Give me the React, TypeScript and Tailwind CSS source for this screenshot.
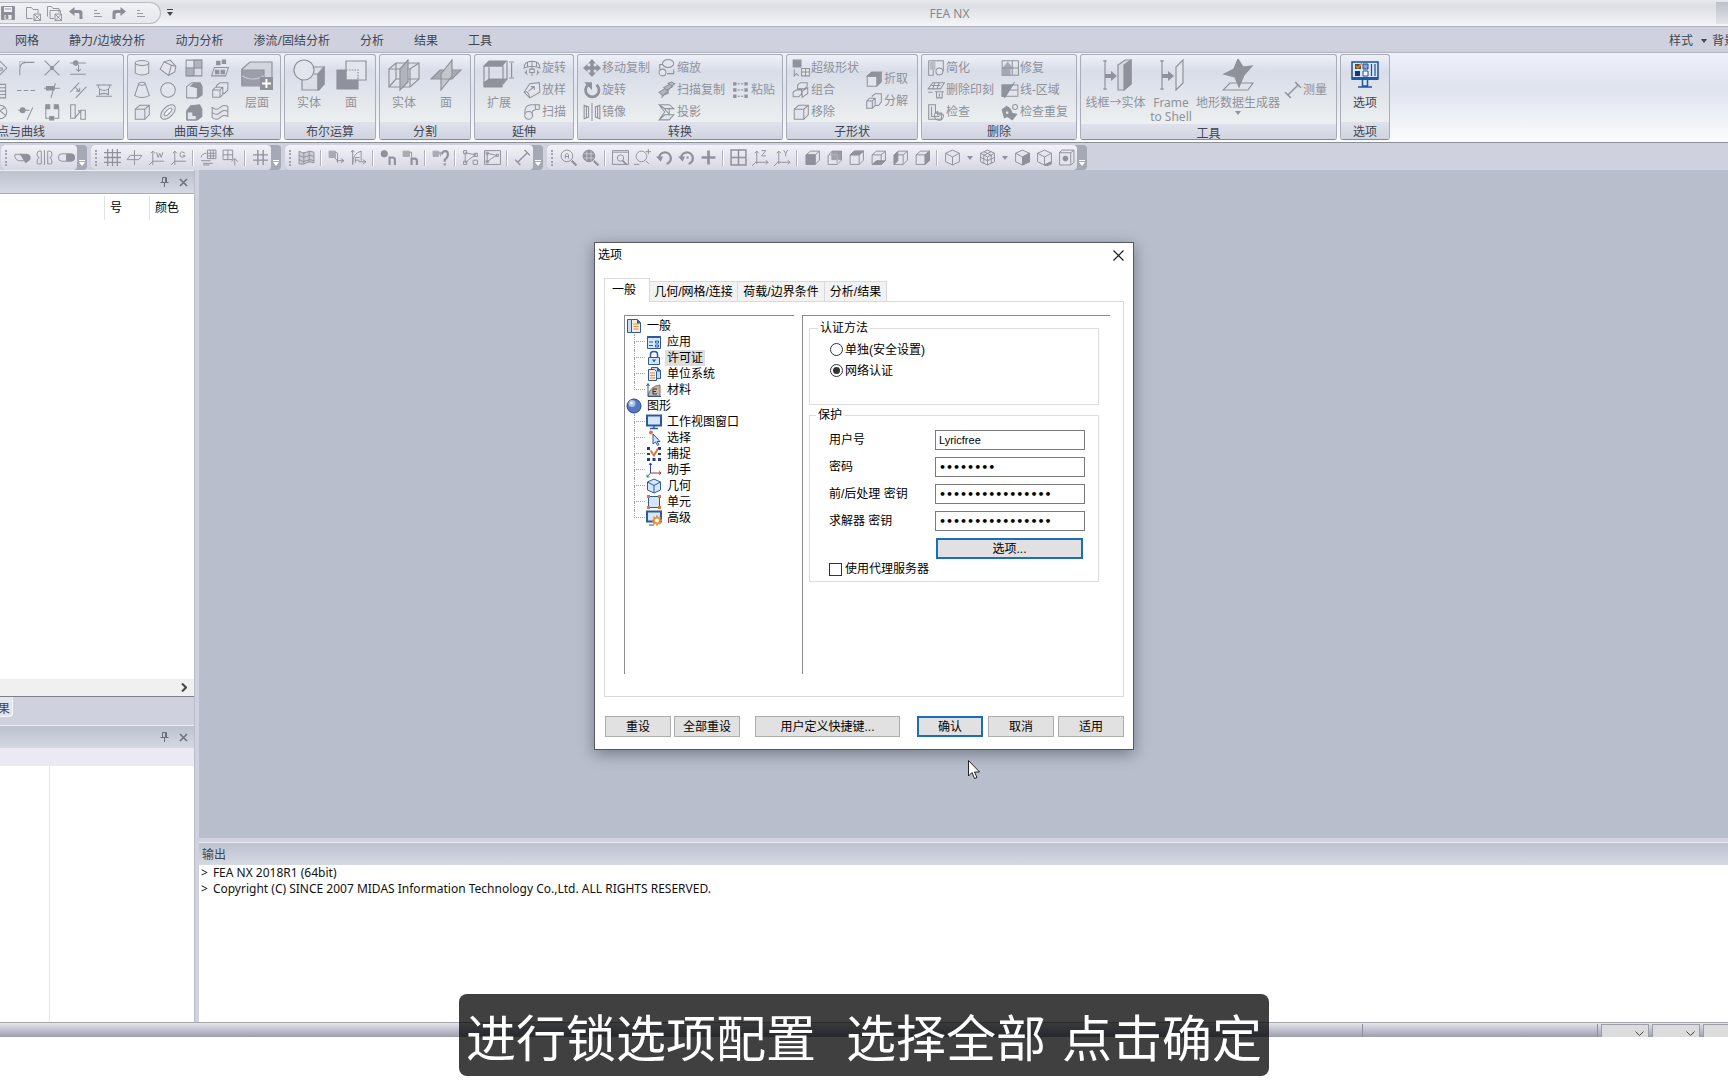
import React from "react";

/* ---------- icon drawings ---------- */

const L = "#e3e5ec";
const F = "currentColor";

const cube = (
  <>
    <path d="M2 5.500 6 2h8.500v8.500l-4 4H2z" fill={L} />
    <path d="M2 5.500h8.500v9M10.500 5.500l4-3.500" />
  </>
);
const isoCube = (
  <>
    <path d="M8 1 14.500 4v8L8 15 1.500 12V4z" fill={L} />
    <path d="M1.500 4 8 7.500 14.500 4M8 7.500V15" />
  </>
);

const art: Record<string, React.ReactNode> = {
  save: (
    <>
      <path d="M1.500 1.500h13v13h-13z" fill="#8b8e98" />
      <path d="M4 2h8v5H4zM4.500 10h7v4.500h-7z" fill="#f0f1f4" stroke="none" />
      <path d="M6 10.500h2v3H6z" fill={F} />
      <path d="M5 4h6" />
    </>
  ),
  folderX: (
    <>
      <path d="M1.500 13.500v-11h5l1.500 2h5v4M1.500 13.500h6" />
      <path d="M9 9h6.500v6.500H9zM9 9l6.500 6.500M15.500 9 9 15.500" />
    </>
  ),
  foldersX: (
    <>
      <path d="M1.500 11.500v-10h4l1.500 2h6v4M4 13.500h4M4 13.500v-8h10.500v3" />
      <path d="M9 9h6.500v6.500H9zM9 9l6.500 6.500M15.500 9 9 15.500" />
    </>
  ),
  undo: <path d="M1 6.500 6.500 2v3h5q3 0 3 3v6h-3V9.500q0-1.500-1.500-1.500H6.500v3z" fill={F} stroke="none" />,
  redo: <path d="M15 6.500 9.500 2v3h-5q-3 0-3 3v6h3V9.500q0-1.500 1.500-1.500h3.500v3z" fill={F} stroke="none" />,
  list: <path d="M4 5.500h3M4 8.500h6M4 11.500h8" />,
  diamond: <path d="M2 8 8 2l6 6-6 6zM6 8h4v2H6z" />,
  coil: <path d="M3 3h10v3H3zM4 6h9v3H4zM5 9h8v3H5zM6 12h7v3H6z" fill={L} />,
  dial: (
    <>
      <circle cx="8" cy="8" r="6" />
      <path d="M2 10 8 7l5 4M8 7l4-3" />
    </>
  ),
  fillet: (
    <>
      <path d="M2.500 14.500V9q0-6 6-6h7" />
      <path d="M2.500 7V2.500H8" strokeDasharray="1 1" />
    </>
  ),
  cross: (
    <>
      <path d="M1.500 1.500 14.500 14.500M14.500 1.500 1.500 14.500" />
      <path d="M6.500 8 8 6.500 9.500 8 8 9.500z" fill={F} />
    </>
  ),
  project: (
    <>
      <path d="M1 3.500h14M1 13.500h14M8.500 5v6M6.500 9l2 2 2-2" />
      <circle cx="6" cy="3.500" r="2" fill={F} />
    </>
  ),
  dashes: <path d="M0 8.500h16" strokeDasharray="4 2" />,
  trim: (
    <>
      <path d="M1 6.500h14M7 15 11 2" />
      <path d="M3 5h7v3H3z" fill={F} />
    </>
  ),
  offset: <path d="M1 10 9 1.500M6 15l9.500-10M5 5l4 4M6.500 9h3V6" />,
  tangent: <path d="M1 3.500h14M3 3.500v3M13 3.500v3M4 7q4 3 8 0v5q-4-2-8 0zM1 13.500h14" />,
  extendPt: (
    <>
      <path d="M1 6.500h10M9 15l5-11" />
      <circle cx="5" cy="6.500" r="2.200" fill={F} />
    </>
  ),
  ptSquare: (
    <>
      <path d="M2.500 3.500v10h11.500v-10h-3M2.500 3.500h3" />
      <path d="M2.500 1.500h3.500v3.500H2.500zM10 1.500h3.500v3.500H10zM6 12h3.500v3H6z" fill={F} />
    </>
  ),
  bars: <path d="M1.500 1.500h4v12h-4zM10.500 6.500h4v8h-4zM5.500 13l5-6M8 7h2.500v3" />,
  cylinder: (
    <>
      <path d="M2 3.500v9q6 3.500 12 0v-9" fill={L} />
      <ellipse cx="8" cy="3.500" rx="6" ry="2.200" fill={L} />
    </>
  ),
  prism: (
    <>
      <path d="M1 9 4.500 2.500 10 1l5 5.500-1 5L8.500 14.500z" fill={L} />
      <path d="M4.500 2.500 11 5.500 8.500 14.500M11 5.500l4 1" />
    </>
  ),
  checker: (
    <>
      <path d="M1 1h14v14H1zM8 1v14M1 8h14" />
      <path d="M8 1h7v7H8zM1 8h7v7H1z" fill={F} opacity=".6" />
    </>
  ),
  dots4: (
    <>
      <path d="M3 7.500h12.500L13 15H.500z" />
      <path d="M5 2h3v3H5zM10 1h3v3h-3zM4 10h3v3H4zM9 10h3v3H9z" fill={F} />
    </>
  ),
  cone: (
    <>
      <path d="M5 2.500 1.500 13q6.500 3.500 13 0L11 2.500" fill={L} />
      <ellipse cx="8" cy="2.500" rx="3" ry="1.300" fill={L} />
    </>
  ),
  sphere: <circle cx="8" cy="8" r="6.500" fill={L} />,
  cubeDark: (
    <>
      <path d="M1.500 5 6 1.500h7.500l1.500 3v8L11 15H1.500z" fill={L} />
      <path d="M5 4.500 8 2h5l2 3v7l-4 3V6z" fill={F} />
    </>
  ),
  cubes: (
    <>
      <path d="M5 4 8 1.500h7V8l-3 3H5z" fill={L} />
      <path d="M1.500 8 4 5.500h6.500v6.500L8 14.500H1.500zM1.500 8H8v6.500M8 8l2.500-2.500" fill={L} />
    </>
  ),
  cube,
  ring: (
    <>
      <ellipse cx="8" cy="8" rx="8" ry="4.500" transform="rotate(-45 8 8)" fill={L} />
      <ellipse cx="8" cy="8" rx="4.500" ry="1.700" transform="rotate(-45 8 8)" fill="#f4f5f8" />
    </>
  ),
  shell: (
    <>
      <path d="M1.500 7 5 2.500 13 1.500l2 4V12l-4 3H1.500z" fill={F} />
      <path d="M2 8h5v3h3v4H2z" fill={L} />
    </>
  ),
  flag: (
    <>
      <path d="M1 2q4 3 7 1t7 0v10q-4-2-7 0t-7 1z" fill="#c9ccd5" />
      <path d="M1 6q4 3 7 1t7 0M1 10q4 3 7 1t7 0M5.500 3v11M10.500 2v10.500" />
    </>
  ),
  sheet: (
    <>
      <path d="M1 4q4 3 7 0t7-1v9q-4-2-7 1t-7 0z" fill={L} />
      <path d="M1 8.500q4 3 7 0t7-1" />
    </>
  ),
  revolve: (
    <>
      <path d="M1 8q0-6 7-6t7 6q-7-3-14 0zM8 2v13M4 7V3M12 7V3M3 10v3M13 10v3M1.500 11.500 4 14M14.500 11.500 12 14" fill="none" />
      <path d="M6 9h4v3H6z" fill={L} />
    </>
  ),
  loft: (
    <>
      <path d="M1 10 6 2.500l8.500-1L15 10l-9 5z" fill={L} />
      <path d="M1 10q4-2 5 5M5 9l5-4M7 5h3v3" />
    </>
  ),
  sweep: (
    <>
      <path d="M1.500 9q0-7.500 6-7.500h7v4q-8 0-6 5z" fill={L} />
      <circle cx="5" cy="11" r="3.500" fill={L} />
      <path d="M11 1.500v4" />
    </>
  ),
  move: <path d="M8 0l3.500 4h-2v2.500H12v-2L16 8l-4 3.500v-2H9.500V12h2L8 16l-3.500-4h2V9.500H4v2L0 8l4-3.500v2h2.500V4h-2z" fill={F} stroke="none" />,
  rotate: (
    <>
      <path d="M4.500 3.500a6 6 0 1 0 7.500 0" strokeWidth="2.500" />
      <path d="M1 1h7v7z" fill={F} stroke="none" />
    </>
  ),
  mirror: <path d="M1 2l4 1.500v9L1 14zM15 2l-4 1.500v9L15 14zM8 0v16M3 3v10M13 3v10" fill={L} />,
  scale: (
    <>
      <ellipse cx="9" cy="4" rx="5" ry="3.500" fill={L} />
      <circle cx="4" cy="12" r="3" fill={L} />
      <path d="M1.500 9V5h3M8 13h6V9" />
    </>
  ),
  sweepCopy: <path d="M1 10l5-3 3 2-5 4zM5 6l5-3 3 2-5 3zM9 2l3-1 3 1.500-3 2zM3 15l9-10M6 12l3-1v-3" fill="#b5b7c0" />,
  shadow: <path d="M1 1.500h9l4 3.500H6zM1 15h9l4-4.500H6zM10 5v6M6 5.500 10 10M1 1.500 6 8l-5 7" fill={L} />,
  paste: (
    <>
      <path d="M1 1h3v3H1zM11 1h3v3h-3zM1 6.500h3v3H1zM11 6.500h3v3h-3zM1 12h3v3H1zM11 12h3v3h-3z" fill={F} stroke="none" />
      <path d="M5 2.500h5M5 8h5M5 13.500h5" strokeDasharray="2 1" />
    </>
  ),
  superShape: (
    <>
      <path d="M1 1h7v6H1z" fill={F} />
      <path d="M8.500 8.500h7v6.500h-7zM12 8.500V15M8.500 11.500h7" fill={L} />
      <path d="M2 9v6l2-2 2 2" />
    </>
  ),
  group: <path d="M5 3.500 7.500 1.500h6v3L11 7H5zM1 10l2.500-2h5v3.500L6 14H1zM9 9l5-3v5l-5 3.500z" fill={L} />,
  cubeTop: (
    <>
      {cube}
      <path d="M2 5.500 6 2h8.500l-4 3.500zM11 6l3-3v7l-3 3z" fill={F} />
    </>
  ),
  explode: <path d="M1.500 8 4 5.500h5V12l-2.500 2.500h-5zM6 4l3-2.500h5.500V9L12 12H9M1.500 8h5v6.500M6.500 8 9 5.500" fill={L} />,
  simplify: (
    <>
      <path d="M1.500 1.500h13v9h-5M1.500 1.500v13h4v-5" fill={L} />
      <circle cx="11" cy="11" r="3" fill={L} />
      <path d="M3 3h4v6H3z" fill={F} opacity=".5" />
    </>
  ),
  imprint: (
    <>
      <path d="M5 1.500h10.500L12 7H1z" fill={L} />
      <path d="M4 4h8M7 1.500 5 7M11 1.500 9 7M1 10h4M7 9.500h8M8.500 9.500V15h5V9.500M11 11v3" />
    </>
  ),
  check: (
    <>
      <path d="M1.500 1.500h6V9H13v5.500H1.500z" fill={L} />
      <path d="M4 3v9h7M9.500 7.500a4 4 0 1 0 5 3h-5z" />
    </>
  ),
  repair: (
    <>
      <path d="M1 1.500h14.500v13H1zM1 8h14.500M10 1.500v13" />
      <path d="M2 14V8l4-5 4 5-2 1v5z" fill={F} opacity=".7" />
    </>
  ),
  lineArea: (
    <>
      <path d="M1 3.500h14v10H1z" fill={L} />
      <path d="M1 3.500h9L4 13.500H1z" fill={F} />
      <path d="M3 15 12 1M8 8h7" />
    </>
  ),
  dup: (
    <>
      <path d="M1 6l4-3 3 2 2 4 4 1-4 5-4-3-3 1z" fill={F} />
      <circle cx="12.500" cy="3.500" r="2.200" />
      <path d="M4 7h3v3H4z" fill={L} />
    </>
  ),
  measure: <path d="M3.500 12.500 12.500 3.500M1 10l5 5M10 1l5 5" strokeWidth="1.300" />,
  layers: (
    <>
      <path d="M.500 5 4.500 1.500H15.500v12H.500z" fill="#d3d5dd" />
      <path d="M.500 5.500H11.500V13H.500z" fill="#9c9fa9" />
      <path d="M.500 8.500q5 3 11 0" stroke="#c6c8d0" />
      <path d="M9.500 9h6.500v6.500H9.500z" fill="#8f929c" stroke="none" />
      <path d="M12.700 10v4.500M10.500 12.200h4.500" stroke="#fff" strokeWidth="1" />
    </>
  ),
  boolSolid: (
    <>
      <path d="M4.500 6 7 4h8.500v8.500L13 15.500H4.500z" fill="#dcdee5" />
      <path d="M12.500 7.500 15.500 4v8.500l-3 3z" fill={F} />
      <path d="M4.500 7.500h8v8" />
      <circle cx="5.500" cy="5.500" r="5" fill={L} />
    </>
  ),
  boolFace: (
    <>
      <path d="M1 5.500h10.500V15H1z" fill={F} />
      <path d="M5.500 1h10v9.500h-10z" fill={L} />
      <path d="M5.500 5.500h6v5h-6z" strokeDasharray=".8 .6" />
    </>
  ),
  splitSolid: (
    <>
      <path d="M.500 5 4 2h11.500V10L11 14H.500z" fill="#dfe1e8" />
      <path d="M.500 5h10.500v9M11 5l4.500-3M4 2V10L.500 14M4 10h11.500" />
      <path d="M6 5 10 .500v11L6 15.500z" fill="#b3b5be" />
    </>
  ),
  splitFace: (
    <>
      <path d="M.500 10 5 5.500h10.500L11 10z" fill="#a9abb4" />
      <path d="M5.500 7.500 11 .500v8L5.500 15.500z" fill="#c4c6ce" />
      <path d="M5.500 10h5" />
    </>
  ),
  extrude: (
    <>
      <path d="M.500 3.500 3 1h8.500L9.500 3.500z" fill={F} />
      <path d="M.500 3.500h9.500v9l2-2.500V1M.500 3.500v9M3 4v6M13 1.500h2.500M13 9.500h2.500M14.300 2v7" />
      <path d="M.500 12 3 10h8.500L9.500 12v2H.500z" fill={F} />
    </>
  ),
  wire2solid: (
    <>
      <path d="M2.500 .500v15M1.500 1h2M1.500 15h2" />
      <path d="M2.500 7.500h3V6l3 2.500-3 2.500V9.500h-3z" fill={F} stroke="none" />
      <path d="M9 3l3.500-2.500h3v12L12 15.500H9z" fill="#d7d9e0" />
      <path d="M12 3 15.500.500v12L12 15.500z" fill={F} />
    </>
  ),
  frame2shell: (
    <>
      <path d="M3.500 .500v15M2.500 1h2M2.500 15h2" />
      <path d="M3.500 7.500h3V6l3 2.500-3 2.500V9.500h-3z" fill={F} stroke="none" />
      <path d="M10.500 4l3.500-3.500v11.500L10.500 15.500z" fill={L} />
    </>
  ),
  terrain: (
    <>
      <path d="M4 12h11.500l-2.500 3.500H.500z" />
      <path d="M8 0 10.500 4l4.500-.500-4 4.500-2.500 6L6.500 9 1 7.500 6 5z" fill={F} />
    </>
  ),
  cap1: (
    <>
      <path d="M1 5h6l4 6H4Q0 9 1 5z" fill={L} />
      <path d="M6 5h6q4 0 3 5l-4 3z" fill={F} />
    </>
  ),
  cap2: <path d="M5 2H3q-2 0-2 3t2 3q-2 1-2 4t2 2h2V2M11 2h2q2 0 2 3t-2 3q2 1 2 4t-2 2h-2V2M8 1v14" />,
  cap3: (
    <>
      <rect x=".5" y="4.500" width="15" height="7" rx="3" fill={L} />
      <path d="M8 5h5q2.500 0 2.500 3T13 11H8z" fill={F} />
    </>
  ),
  grid: <path d="M3.500 0v16M8 0v16M12.500 0v16M0 3.500h16M0 8h16M0 12.500h16" strokeWidth="1.200" />,
  plane: <path d="M4 6h11l-3 4H1zM8 1v14" fill="none" />,
  axisW: <path d="M4.500 15V2M2.500 4l2-2 2 2M4.500 11.500H15M1 15l3.500-3.500M8 3l1.500 5L11 4l1.500 4L14 3" />,
  axisG: <path d="M4.500 15V2M2.500 4l2-2 2 2M4.500 11.500H15M1 15l3.500-3.500M14 4q-4-3-4.500 1t4.500 2V6h-2" />,
  gridMove: <path d="M7 1h8v8H7zM7 4h8M7 6.500h8M10 1v8M12.500 1v8M1 8q1-4 5-4M1 11h9M3 13.500h9M3 15h6" />,
  gridPick: <path d="M1 1h9v9H1zM5.500 1v9M1 5.500h9M9 12l3-3 3 3M12 9v6.500" />,
  hash: <path d="M5.500 1v14M10.500 1v14M1 5.500h14M1 10.500h14" strokeWidth="1.300" />,
  nodeSel: (
    <>
      <path d="M1 2h6v6H1z" fill={F} opacity=".7" />
      <path d="M7 3l2 1v9M8 11h7M12 9l3 2-3 2M6 8l3 3" />
    </>
  ),
  elemSel: <path d="M2.500 1v14M1 3l1.500-2L4 3M2.500 14q0-10 8-12v9M5 13V8h4M5 10.500h4M8 12h7M12 10l3 2-3 2" />,
  ptN: (
    <>
      <circle cx="4" cy="4.500" r="3" fill={F} />
      <path d="M9 15V8h3q2 0 2 2.500V15" strokeWidth="2" />
    </>
  ),
  boxN: (
    <>
      <path d="M1 2h6v5H1z" fill={F} opacity=".7" />
      <path d="M7 3h2v5" />
      <path d="M9 15V9h3q2 0 2 2.500V15" strokeWidth="2" />
    </>
  ),
  boxQ: (
    <>
      <path d="M1 2h5v5H1zM6 3h2v4" fill={F} opacity=".7" />
      <path d="M9 5q1-3 3.500-3T15 5t-3 5v2M12 13.500v2" strokeWidth="2" />
    </>
  ),
  net1: <path d="M3 3.500l10 2-6 4-4 3.500zM1.500 1.500h3v3h-3zM11.500 4h3v3h-3zM1.500 11.500h3v3h-3zM10.500 10.500h4v4h-4z" fill={L} />,
  net2: <path d="M.500 1.500h15v13H.500zM3 4l9 2-5 3-4 3zM2 3h2v2H2zM11.500 5h2v2h-2zM2 11h2v2H2z" fill={L} />,
  zoomA: (
    <>
      <circle cx="6.500" cy="6.500" r="5.500" />
      <path d="M5 9V5.500L6.500 4 8 5.500V9M5 7h3" />
      <path d="M11 11l4.500 4.500" strokeWidth="2" />
    </>
  ),
  zoomGrid: (
    <>
      <circle cx="6.500" cy="6.500" r="5.500" fill={F} />
      <path d="M4.500 2v9M8.500 2v9M2 4.500h9M2 8.500h9" stroke="#e3e5ec" strokeWidth=".6" />
      <path d="M11 11l4.500 4.500" strokeWidth="2" />
    </>
  ),
  zoomWin: (
    <>
      <path d="M.500 1.500h15v13H.500zM1 3h14" />
      <circle cx="8" cy="8.500" r="3" />
      <path d="M10 11l4 4" strokeWidth="1.500" />
    </>
  ),
  zoomPM: (
    <>
      <circle cx="7" cy="7" r="5" />
      <path d="M11 11l3 3M11 2.500h5M13.500 0v5M0 14.500h5" />
    </>
  ),
  spinL: (
    <>
      <path d="M3 8a5.500 5.500 0 1 1 7 6" strokeWidth="2.200" />
      <path d="M0 7h6.500l-2 5z" fill={F} stroke="none" />
    </>
  ),
  spinDot: (
    <>
      <path d="M3 8a5.500 5.500 0 1 1 7 6" strokeWidth="2.200" />
      <path d="M0 7h6.500l-2 5zM8 7h2v2H8z" fill={F} stroke="none" />
    </>
  ),
  plus: <path d="M8 1.500v13M1.500 8h13" strokeWidth="2.500" />,
  windows: <path d="M1 1h14v14H1zM8 1v14M1 8h14" strokeWidth="1.400" />,
  axisZ: <path d="M4.500 14V2M2.500 4l2-2 2 2M3 12.500h12M13 10.500l2 2-2 2M0 16l4-4M9 1.500h4l-4 5h4" />,
  axisY: <path d="M4.500 14V2M2.500 4l2-2 2 2M3 12.500h12M13 10.500l2 2-2 2M0 16l4-4M9 1l2 3 2-3M11 4v3" />,
  vFront: (
    <>
      {cube}
      <path d="M2 5.500h8.500v9H2z" fill={F} />
    </>
  ),
  vBack: (
    <>
      {cube}
      <path d="M5.500 2.500h9V10h-9z" fill={F} opacity=".8" />
      <path d="M2 5.500h8.500v9" stroke="#e3e5ec" strokeDasharray="1 1" />
    </>
  ),
  vTop: (
    <>
      {cube}
      <path d="M2 5.500 6 2h8.500l-4 3.500z" fill={F} />
    </>
  ),
  vBottom: (
    <>
      {cube}
      <path d="M2 14.500 6 11h8.500l-4 3.500z" fill={F} />
    </>
  ),
  vLeft: (
    <>
      {cube}
      <path d="M2 5.500 5.500 2.500V11L2 14.500z" fill={F} />
    </>
  ),
  vRight: (
    <>
      {cube}
      <path d="M10.500 5.500 14.500 2v8.500l-4 4z" fill={F} />
    </>
  ),
  iso: isoCube,
  isoGrid: (
    <>
      {isoCube}
      <path d="M4.500 5.500v8M11.500 5.500v8M1.500 8 8 11l6.500-3M4.500 2.500 11.500 6M11.500 2.500 4.500 6" />
    </>
  ),
  isoDark: (
    <>
      {isoCube}
      <path d="M8 7.500 14.500 4v8L8 15z" fill={F} />
    </>
  ),
  isoShadow: (
    <>
      {isoCube}
      <path d="M8 15l6.500-3v2L10 16z" fill={F} />
    </>
  ),
  boxDot: (
    <>
      <path d="M1.500 3 4 1h11v11.500L12 15H1.500zM12 3.500V15M1.500 3.500H12L15 1" fill={L} />
      <circle cx="7" cy="9" r="2.300" fill={F} />
    </>
  ),
};

function Icon({ n, className = "size-[18px]", thin }: { n: string; className?: string; thin?: boolean }) {
  return (
    <svg viewBox="0 0 16 16" fill="none" stroke="currentColor" strokeWidth={thin ? 0.6 : 0.9} className={`shrink-0 ${className}`} aria-hidden="true">
      {art[n]}
    </svg>
  );
}

/* ---------- ribbon ---------- */

function Group({ title, width, children }: { title: string; width: string; children: React.ReactNode }) {
  return (
    <section
      className={`flex h-[86px] shrink-0 flex-col overflow-hidden rounded-[3px] border border-[#a9adb8] border-b-[#858a94] bg-linear-to-b from-[#eef0f9] from-0% via-[#d9dde8] via-20% to-[#f0f4f1] to-95% ${width}`}
    >
      <div className="flex flex-1 pt-px text-[#8f929b]">{children}</div>
      <h2 className="h-[17px] shrink-0 bg-linear-to-b from-[#dfe2ec] to-[#d0d4e0] text-center text-xs leading-5 text-[#3f4552]">{title}</h2>
    </section>
  );
}

function Small({ n, label }: { n: string; label: string }) {
  return (
    <button type="button" className="flex h-[22px] items-center gap-px pt-0.5 text-xs leading-4 whitespace-nowrap">
      <Icon n={n} />
      {label}
    </button>
  );
}

function Big({ n, label, width, children }: { n: string; label: React.ReactNode; width: string; children?: React.ReactNode }) {
  return (
    <button type="button" className={`flex shrink-0 flex-col items-center pt-[3px] text-xs leading-[13px] whitespace-nowrap ${width}`}>
      {children ?? <Icon n={n} className="size-8" thin />}
      <span className="mt-[5px]">{label}</span>
    </button>
  );
}

function IconGrid({ rows }: { rows: string[][] }) {
  return (
    <div className="flex flex-col">
      {rows.map((r, i) => (
        <div key={i} className="flex h-[22px] items-center pt-px">
          {r.map((n, j) => (
            <button key={j} type="button" aria-label={n || "empty"} className="flex w-[26px] justify-center">
              {n ? <Icon n={n} /> : null}
            </button>
          ))}
        </div>
      ))}
    </div>
  );
}

function Caret({ className = "" }: { className?: string }) {
  return (
    <svg viewBox="0 0 6 4" className={`h-1 w-1.5 ${className}`} fill="currentColor" aria-hidden="true">
      <path d="M0 0h6L3 4z" />
    </svg>
  );
}

function Ribbon() {
  return (
    <div className="flex h-[91px] gap-[3px] overflow-hidden border-y border-t-[#b4b7c2] border-b-[#8d919b] bg-linear-to-b from-[#eef1fb] via-[#dfe3ed] via-40% to-[#fbfcfd] pt-px shadow-sm">
      <Group title="点与曲线" width="-ml-[82px] w-[206px]">
        <div className="ml-auto pr-1.5">
          <IconGrid
            rows={[
              ["diamond", "fillet", "cross", "project", ""],
              ["coil", "dashes", "trim", "offset", "tangent"],
              ["dial", "extendPt", "ptSquare", "bars", ""],
            ]}
          />
        </div>
      </Group>
      <Group title="曲面与实体" width="w-[154px]">
        <div className="pl-px">
          <IconGrid
            rows={[
              ["cylinder", "prism", "checker", "dots4"],
              ["cone", "sphere", "cubeDark", "cubes"],
              ["cube", "ring", "shell", "sheet"],
            ]}
          />
        </div>
        <Big n="layers" label="层面" width="w-12" />
      </Group>
      <Group title="布尔运算" width="w-[92px]">
        <Big n="boolSolid" label="实体" width="w-12" />
        <Big n="boolFace" label="面" width="w-9" />
      </Group>
      <Group title="分割" width="w-[92px]">
        <Big n="splitSolid" label="实体" width="w-12" />
        <Big n="splitFace" label="面" width="w-9" />
      </Group>
      <Group title="延伸" width="w-[100px]">
        <Big n="extrude" label="扩展" width="w-12" />
        <div>
          <Small n="revolve" label="旋转" />
          <Small n="loft" label="放样" />
          <Small n="sweep" label="扫描" />
        </div>
      </Group>
      <Group title="转换" width="w-[206px]">
        <div className="w-20 shrink-0 pl-[5px]">
          <Small n="move" label="移动复制" />
          <Small n="rotate" label="旋转" />
          <Small n="mirror" label="镜像" />
        </div>
        <div className="w-[74px] shrink-0">
          <Small n="scale" label="缩放" />
          <Small n="sweepCopy" label="扫描复制" />
          <Small n="shadow" label="投影" />
        </div>
        <div className="pt-[22px]">
          <Small n="paste" label="粘贴" />
        </div>
      </Group>
      <Group title="子形状" width="w-[132px]">
        <div className="w-[78px] shrink-0 pl-[5px]">
          <Small n="superShape" label="超级形状" />
          <Small n="group" label="组合" />
          <Small n="cube" label="移除" />
        </div>
        <div className="pt-[11px]">
          <Small n="cubeTop" label="折取" />
          <Small n="explode" label="分解" />
        </div>
      </Group>
      <Group title="删除" width="w-[156px]">
        <div className="w-[79px] shrink-0 pl-[5px]">
          <Small n="simplify" label="简化" />
          <Small n="imprint" label="删除印刻" />
          <Small n="check" label="检查" />
        </div>
        <div>
          <Small n="repair" label="修复" />
          <Small n="lineArea" label="线-区域" />
          <Small n="dup" label="检查重复" />
        </div>
      </Group>
      <Group title="工具" width="w-[257px]">
        <Big n="wire2solid" label="线框→实体" width="w-[69px]" />
        <Big
          n="frame2shell"
          width="w-[42px]"
          label={
            <span className="flex flex-col items-center leading-[14px]">
              <span>Frame</span>
              <span>to Shell</span>
            </span>
          }
        />
        <Big
          n="terrain"
          width="w-[92px]"
          label={
            <span className="flex flex-col items-center gap-0.5">
              地形数据生成器
              <Caret />
            </span>
          }
        />
        <div className="pt-[22px]">
          <Small n="measure" label="测量" />
        </div>
      </Group>
      <Group title="选项" width="w-[50px]">
        <Big n="" label={<span className="text-[#3f4552]">选项</span>} width="w-12">
          <svg viewBox="0 0 28 32" className="h-8 w-7" aria-hidden="true">
            <path d="M1 3h26v17H1z" fill="#d7e8fb" stroke="#1f4e96" strokeWidth="1.500" />
            <path d="M1 18h26v3H1z" fill="#1f57ad" />
            <path d="M4 5h6v5H4z" fill="#5a4a3a" />
            <path d="M5 7l2 2 4-5" stroke="#e88a2c" strokeWidth="1.500" fill="none" />
            <path d="M12 5h5v5h-5z" fill="#8fa4cc" stroke="#1f4e96" />
            <path d="M4 12h5v5H4z" fill="#123a78" />
            <path d="M12 12h5v5h-5z" fill="#fff" stroke="#1f4e96" />
            <path d="M20.500 5v12M24 5v12" stroke="#1f4e96" strokeWidth="1.200" />
            <path d="M11.500 21v6h5v-6M7 28h14" fill="#d7e8fb" stroke="#1f57ad" strokeWidth="1.500" />
          </svg>
        </Big>
      </Group>
    </div>
  );
}

/* ---------- toolbars ---------- */

const toolbars: string[][] = [
  ["cap1", "cap2", "cap3"],
  ["grid", "plane", "axisW", "axisG", "|", "gridMove", "gridPick", "|", "hash"],
  ["flag", "|", "nodeSel", "elemSel", "|", "ptN", "boxN", "|", "boxQ", "|", "net1", "net2", "|", "measure"],
  ["zoomA", "zoomGrid", "|", "zoomWin", "zoomPM", "spinL", "spinDot", "plus", "|", "windows", "axisZ", "axisY", "|", "vFront", "vBack", "vTop", "vBottom", "vLeft", "vRight", "|", "iso", "v", "isoGrid", "v", "isoDark", "isoShadow", "boxDot"],
];

function Toolbars() {
  return (
    <div className="flex h-[27px] gap-1 overflow-hidden bg-[#cfd2de] pt-0.5 pl-px text-[#8e919b]">
      {toolbars.map((t, i) => (
        <div key={i} className="flex h-[25px] shrink-0 overflow-hidden rounded bg-[#a5a9b5]">
          <div className="flex items-center rounded bg-linear-to-b from-[#f2f1f8] to-[#d6d8e3]">
            <span className="flex w-[10px] justify-center">
              <span className="h-4 border-l-2 border-dotted border-[#a0a3b0]" />
            </span>
            {t.map((n, j) =>
              n === "|" ? (
                <span key={j} className="flex w-2 justify-center">
                  <span className="h-4 w-0.5 border-l border-[#b0b3be] bg-white" />
                </span>
              ) : n === "v" ? (
                <button key={j} type="button" aria-label="more" className="flex w-[13px] justify-center">
                  <Caret />
                </button>
              ) : (
                <button key={j} type="button" aria-label={n} className="flex w-[22px] justify-center">
                  <Icon n={n} className="size-[17px]" />
                </button>
              ),
            )}
          </div>
          <button type="button" aria-label="toolbar options" className="flex w-[10px] flex-col items-center justify-end gap-px pb-1 text-white">
            <span className="h-px w-1.5 bg-white" />
            <Caret />
          </button>
        </div>
      ))}
    </div>
  );
}

/* ---------- side panels ---------- */

function PanelHead() {
  return (
    <header className="flex h-[23px] shrink-0 items-center justify-end gap-2.5 border-t border-[#eceef4] bg-linear-to-b from-[#bcc1ce] to-[#d5d9e4] pr-1.5 text-[#6b6f7a]">
      <button type="button" aria-label="pin">
        <svg viewBox="0 0 9 10" className="h-2.5 w-[9px]" fill="none" stroke="currentColor">
          <path d="M2.500 5.500v-5h4v5M5.500 1v4.500M.500 5.500h8M4.500 6v4" />
        </svg>
      </button>
      <button type="button" aria-label="close panel">
        <svg viewBox="0 0 9 9" className="size-[9px]" fill="none" stroke="currentColor" strokeWidth="1.500">
          <path d="M1 1l7 7M8 1 1 8" />
        </svg>
      </button>
    </header>
  );
}

function Side() {
  return (
    <aside className="flex w-[195px] shrink-0 flex-col border-r border-[#b9bcc8] bg-[#cfd2de]">
      <PanelHead />
      <div className="flex h-[504px] flex-col border-t border-b border-t-[#a9acb8] border-b-[#7d8088] bg-white text-xs text-black">
        <div className="flex flex-1 items-start justify-end pt-0.5">
          <div className="h-6 w-[45px] border-l border-[#e2e2e6] pl-[5px] leading-6">号</div>
          <div className="h-6 w-[45px] border-l border-[#e2e2e6] pl-[5px] leading-6">颜色</div>
        </div>
        <div className="flex h-[17px] items-center justify-end bg-[#f0f0f0] pr-[7px]">
          <svg viewBox="0 0 6 9" className="h-[9px] w-1.5" fill="none" stroke="#444" strokeWidth="2">
            <path d="M1 .500l4 4-4 4" />
          </svg>
        </div>
      </div>
      <div className="h-[28px] overflow-hidden">
        <button type="button" className="-ml-0.5 h-5 rounded-b border-r border-b border-[#f6f7fa] bg-[#e3e6ee] pt-1 pr-0.5 text-xs leading-4 text-[#3f4552]">
          果
        </button>
      </div>
      <PanelHead />
      <div className="h-[18px] bg-[#ebe9f2]" />
      <div className="flex-1 bg-white">
        <div className="h-full w-[50px] border-r border-[#e6e6ea]" />
      </div>
    </aside>
  );
}

/* ---------- options dialog ---------- */

const B = "#2c5aa0";
const treeArt: Record<string, React.ReactNode> = {
  doc: (
    <>
      <path d="M1.500 1.500h4v13h-4z" fill="#c9dcf5" stroke={B} />
      <path d="M5.500 1.500h6l3 3v10h-9z" fill="#fbead6" stroke={B} />
      <path d="M7.500 6h5M7.500 8.500h5M7.500 11h5" stroke="#e08a3c" />
      <path d="M11 1.500v4h4z" fill={B} />
    </>
  ),
  app: (
    <>
      <path d="M1.500 2.500h13v12h-13z" fill="#d6e6fa" stroke={B} />
      <path d="M1.500 3h13" stroke={B} strokeWidth="2" />
      <path d="M3 8h4M3 11.500h4M9.500 7h3v2h-3zM9.500 11h3v2h-3z" stroke={B} />
    </>
  ),
  lock: (
    <>
      <path d="M4.500 7V4q0-2.500 3.500-2.500T11.500 4v3" stroke={B} strokeWidth="1.500" />
      <path d="M2.500 7.500h11v7h-11z" fill="#d6e6fa" stroke={B} />
      <path d="M6 9.500h4l-2 3z" fill={B} />
    </>
  ),
  unit: (
    <>
      <path d="M5.500 1.500h6l3 3v8h-9z" fill="#c9dcf5" stroke={B} />
      <path d="M2.500 3.500h6l2 2v9h-8z" fill="#fbead6" stroke={B} />
      <path d="M4 7h5M4 9.500h5M4 12h5" stroke="#e08a3c" />
      <path d="M11 1.500v4h4z" fill={B} />
    </>
  ),
  mat: (
    <>
      <path d="M2 14q2-10 12-11v11z" fill="#c9b7aa" stroke="#8a6f60" />
      <path d="M2 2v12.500h13M.500 4 2 1.500 3.500 4" stroke={B} />
      <path d="M7 12V7h4M7 9.500h3M7 12h4" stroke="#333" />
    </>
  ),
  ball: (
    <>
      <circle cx="8" cy="8" r="7" fill="#5577bd" stroke="#2b4785" />
      <circle cx="6" cy="5.500" r="3.500" fill="#a9c0ea" />
      <circle cx="5.500" cy="5" r="1.500" fill="#e8f0fc" />
    </>
  ),
  mon: (
    <>
      <path d="M1 1.500h14v10H1z" fill="#d6e6fa" stroke={B} strokeWidth="2" />
      <path d="M8 12v3M4 14.500h8" stroke={B} strokeWidth="1.500" />
    </>
  ),
  sel: (
    <>
      <circle cx="5" cy="2.500" r="2" fill="#e0763a" />
      <path d="M7 4v10l2.500-2 2 3.500 1.500-1-2-3H14z" fill="#d6e6fa" stroke={B} />
    </>
  ),
  snap: (
    <>
      <path d="M1 1h3v3H1zM12 1h3v3h-3zM1 7h3v2H1zM12 7h3v2h-3zM1 12h3v3H1zM6.500 12h3v3h-3zM12 12h3v3h-3z" fill="#1f3f80" />
      <path d="M4.500 4.500l3.500 5 4-7" stroke="#e0763a" strokeWidth="2" />
    </>
  ),
  axis: (
    <>
      <path d="M4.500 11V1M3 3l1.500-2L6 3" stroke="#2a49c0" />
      <path d="M4.500 11H15M13 9.500l2 1.500-2 1.500" stroke="#b03030" />
      <path d="M4.500 11 1 15M1 12.500V15h2.500" stroke="#2f8a50" />
    </>
  ),
  geo: (
    <>
      <path d="M8 1 14.500 4v8L8 15 1.500 12V4z" fill="#d6e6fa" stroke={B} />
      <path d="M1.500 4 8 7.500 14.500 4M8 7.500V15" stroke={B} />
    </>
  ),
  elem: (
    <>
      <path d="M2.500 2.500h11v11h-11z" fill="#d6e6fa" stroke={B} />
      <path d="M1 1h3v3H1zM12 1h3v3h-3zM1 12h3v3H1zM12 12h3v3h-3z" fill="#e0763a" />
    </>
  ),
  adv: (
    <>
      <path d="M1 1.500h14v10H1z" fill="#d6e6fa" stroke={B} strokeWidth="2" />
      <path d="M3 15h5" stroke={B} />
      <path d="M11 5.500v10M6 10.500h10M7.500 7l7 7M14.500 7l-7 7" stroke="#f0902c" strokeWidth="2" />
      <circle cx="11" cy="10.500" r="2.800" fill="#fff" stroke="#f0902c" strokeWidth="1.500" />
    </>
  ),
};

const tree = [
  { icon: "doc", label: "一般", items: [["app", "应用"], ["lock", "许可证"], ["unit", "单位系统"], ["mat", "材料"]] },
  {
    icon: "ball",
    label: "图形",
    items: [["mon", "工作视图窗口"], ["sel", "选择"], ["snap", "捕捉"], ["axis", "助手"], ["geo", "几何"], ["elem", "单元"], ["adv", "高级"]],
  },
];

function TreeIcon({ n }: { n: string }) {
  return (
    <svg viewBox="0 0 16 16" fill="none" className="size-4 shrink-0" aria-hidden="true">
      {treeArt[n]}
    </svg>
  );
}

function Tree() {
  return (
    <ul className="flex-1 border-t border-l border-[#8c8c8c] pt-0.5 pl-px">
      {tree.map((g) => (
        <li key={g.label}>
          <div className="flex h-4 items-center gap-[5px]">
            <TreeIcon n={g.icon} />
            {g.label}
          </div>
          <ul>
            {g.items.map(([icon, label], i) => (
              <li key={label} className="flex h-4 items-center pl-2">
                <span className="mr-px w-[11px]">
                  <span className="block h-2 border-b border-l border-dotted border-[#a0a0a0]" />
                  <span className={i < g.items.length - 1 ? "block h-2 border-l border-dotted border-[#a0a0a0]" : "block h-2"} />
                </span>
                <TreeIcon n={icon} />
                <button type="button" className={`ml-[3px] h-4 px-0.5 leading-4 ${label === "许可证" ? "bg-[#dedede]" : ""}`}>
                  {label}
                </button>
              </li>
            ))}
          </ul>
        </li>
      ))}
    </ul>
  );
}

function Push({ children, className, primary }: { children: React.ReactNode; className: string; primary?: boolean }) {
  return (
    <button
      type="button"
      className={`h-[21px] bg-[#e1e1e1] text-center leading-4 ${primary ? "border-2 border-[#1a6fb8]" : "border border-[#adadad]"} ${className}`}
    >
      {children}
    </button>
  );
}

const fields = [
  { id: "user", label: "用户号", type: "text", value: "Lyricfree" },
  { id: "pass", label: "密码", type: "password", value: "12345678" },
  { id: "key1", label: "前/后处理 密钥", type: "password", value: "1234567812345678" },
  { id: "key2", label: "求解器 密钥", type: "password", value: "1234567812345678" },
];

function Radio({ id, label, on }: { id: string; label: string; on?: boolean }) {
  return (
    <label htmlFor={id} className="flex h-[21px] items-center gap-0.5">
      <input
        id={id}
        type="radio"
        name="auth"
        defaultChecked={on}
        className="size-[13px] appearance-none rounded-full border border-[#333] bg-white bg-clip-content p-0.5 checked:bg-[#333]"
      />
      {label}
    </label>
  );
}

function OptionsDialog() {
  return (
    <div
      role="dialog"
      aria-label="选项"
      className="absolute top-[242px] left-1/2 w-[540px] -translate-x-1/2 border border-[#55585f] bg-white font-['Liberation_Sans','Noto_Sans_CJK_SC',sans-serif] text-xs text-black shadow-[0_4px_14px_rgba(40,40,60,0.45)]"
    >
      <div className="flex h-6 items-center justify-between pr-[9px] pl-[3px]">
        <h1>选项</h1>
        <button type="button" aria-label="关闭">
          <svg viewBox="0 0 11 11" className="size-[11px]" fill="none" stroke="#111" strokeWidth="1.100">
            <path d="M.500.500l10 10M10.500.500l-10 10" />
          </svg>
        </button>
      </div>
      <div className="px-[9px] pt-[11px]">
        <div role="tablist" className="flex items-end">
          <button role="tab" type="button" className="z-10 -mb-px h-6 w-[46px] border border-b-0 border-[#dadada] bg-white pr-1.5 pb-0.5">
            一般
          </button>
          <button role="tab" type="button" className="h-5 w-[88px] border-t border-r border-[#dadada] bg-[#f2f2f2]">
            几何/网格/连接
          </button>
          <button role="tab" type="button" className="h-5 w-[87px] border-t border-r border-[#dadada] bg-[#f2f2f2]">
            荷载/边界条件
          </button>
          <button role="tab" type="button" className="h-5 w-[62px] border-t border-r border-[#dadada] bg-[#f2f2f2]">
            分析/结果
          </button>
        </div>
        <div className="flex h-[396px] gap-2 border border-[#dadada] pt-[13px] pr-[13px] pb-[22px] pl-[19px]">
          <div className="flex w-[170px] shrink-0">
            <Tree />
          </div>
          <div className="flex-1 border-t border-l border-[#8c8c8c] pt-1 pr-[11px] pl-1.5">
            <fieldset className="h-[85px] border border-[#dcdcdc] pl-5">
              <legend className="-ml-3 px-0.5 leading-4">认证方法</legend>
              <div className="pt-[3px]">
                <Radio id="auth-single" label="单独(安全设置)" />
                <Radio id="auth-net" label="网络认证" on />
              </div>
            </fieldset>
            <fieldset className="mt-0.5 h-[175px] border border-[#dcdcdc] pl-[19px]">
              <legend className="-ml-[13px] px-0.5 leading-4">保护</legend>
              <div className="flex flex-col gap-[7px] pt-[7px] pr-[13px]">
                {fields.map((f) => (
                  <div key={f.id} className="flex items-center">
                    <label htmlFor={f.id} className="w-[106px]">
                      {f.label}
                    </label>
                    <input
                      id={f.id}
                      type={f.type}
                      defaultValue={f.value}
                      className={`h-5 w-0 flex-1 border border-[#7a7a7a] bg-white px-[3px] text-[11px] ${f.type === "password" ? "font-['DejaVu_Sans',sans-serif] font-bold" : ""}`}
                    />
                  </div>
                ))}
                <Push className="ml-[107px] w-[147px]" primary>
                  选项...
                </Push>
              </div>
              <label htmlFor="proxy" className="mt-px flex h-[18px] items-center gap-[3px]">
                <input id="proxy" type="checkbox" className="size-[13px] appearance-none border border-[#333] bg-white checked:bg-[#333]" />
                使用代理服务器
              </label>
            </fieldset>
          </div>
        </div>
        <div className="flex pt-[19px] pb-3 pl-px">
          <Push className="w-[66px]">重设</Push>
          <Push className="ml-[3px] w-[66px]">全部重设</Push>
          <Push className="ml-[15px] w-[145px]">用户定义快捷键...</Push>
          <Push className="ml-auto w-[66px]" primary>
            确认
          </Push>
          <Push className="ml-[5px] w-[66px]">取消</Push>
          <Push className="ml-1 w-[66px]">适用</Push>
        </div>
      </div>
    </div>
  );
}

/* ---------- page ---------- */

const menus = ["网格", "静力/边坡分析", "动力分析", "渗流/固结分析", "分析", "结果", "工具"];

const log = [
  "FEA NX 2018R1 (64bit)",
  "Copyright (C) SINCE 2007 MIDAS Information Technology Co.,Ltd. ALL RIGHTS RESERVED.",
];

function StatusSelect({ label }: { label: string }) {
  return (
    <div className="relative h-full w-12 border border-b-0 border-[#9b9ea8] bg-[#dcdcde]">
      <select aria-label={label} className="size-full appearance-none">
        <option></option>
      </select>
      <svg viewBox="0 0 9 6" className="pointer-events-none absolute right-1 bottom-0 h-1.5 w-[9px]" fill="none" stroke="#444">
        <path d="M.500.500l4 4 4-4" />
      </svg>
    </div>
  );
}

export default function App() {
  return (
    <div className="relative flex min-h-screen flex-col overflow-hidden bg-white font-['Noto_Sans','Noto_Sans_CJK_SC',sans-serif] text-xs">
      <div className="flex h-[26px] items-start bg-linear-to-b from-[#e6e8ec] via-[#dcdfe4] via-25% to-[#f4f5f7]">
        <div className="mt-0.5 flex h-[22px] w-[161px] items-center rounded-r-full border border-l-0 border-[#b9bcc4] bg-linear-to-b from-[#f0f1f4] to-[#e6e8ec] pr-2 text-[#8b8e98]">
          {["save", "folderX", "foldersX", "undo", "list", "redo", "list"].map((n, i) => (
            <button key={i} type="button" aria-label={n} className="flex flex-1 justify-center first:justify-start">
              <Icon n={n} className="size-4" />
            </button>
          ))}
        </div>
        <button type="button" aria-label="customize" className="mt-[9px] ml-1.5 flex flex-col items-center gap-0.5 text-[#444]">
          <span className="h-px w-1.5 bg-[#444]" />
          <Caret />
        </button>
        <div className="flex-1 pt-1 pl-2.5 text-center text-xs leading-5 text-[#858890]">FEA NX</div>
        <div className="mt-0.5 h-[22px] w-3 bg-linear-to-b from-[#bcc1c9] to-[#e2e4e8]" />
      </div>
      <nav className="flex h-[26px] items-center gap-[30px] border-t border-[#b2b5c0] bg-[#cfd2de] pt-[3px] pl-[15px] whitespace-nowrap text-[#3f4552]">
        {menus.map((m) => (
          <button key={m} type="button" className="leading-5">
            {m}
          </button>
        ))}
        <div className="ml-auto flex w-[59px] items-center overflow-hidden">
          <button type="button" className="flex shrink-0 items-center gap-2">
            样式 <Caret />
          </button>
          <button type="button" className="ml-[5px] shrink-0">
            背景
          </button>
        </div>
      </nav>
      <Ribbon />
      <Toolbars />
      <div className="flex flex-1 bg-[#cfd2de]">
        <Side />
        <main className="ml-1 flex min-w-0 flex-1 flex-col">
          <div className="flex-1 bg-[#b8becb]" />
          <section className="mt-1 flex h-[180px] flex-col border-t border-[#eceef4] bg-white">
            <h2 className="h-[22px] bg-linear-to-b from-[#bcc1ce] to-[#d5d9e4] pl-[3px] leading-6 text-[#3f4552]">输出</h2>
            <div className="pl-0.5 text-xs leading-4 text-[#111]">
              {log.map((line) => (
                <p key={line} className="flex gap-[5px]">
                  <span>&gt;</span>
                  <span>{line}</span>
                </p>
              ))}
            </div>
          </section>
        </main>
      </div>
      <footer className="mb-[43px] flex h-[15px] justify-end gap-[3px] overflow-hidden border-t border-[#a7a8ae] bg-linear-to-b from-[#e3e5ec] via-[#c3c6d2] via-45% to-[#9da0ac] pt-px">
        <div className="w-[236px] border-x border-[#8d909c]" />
        <StatusSelect label="单位一" />
        <StatusSelect label="单位二" />
        <div className="h-full w-[25px] border border-r-0 border-b-0 border-[#9b9ea8] bg-[#dcdcde]" />
      </footer>

      <OptionsDialog />

      <svg viewBox="0 0 12 19" className="absolute top-[760px] left-[968px] h-[19px] w-3" aria-hidden="true">
        <path d="M.500.500v15.500l3.500-3.500 2.500 6 2.500-1-2.500-5.500h5z" fill="#fff" stroke="#222" />
      </svg>

      <div className="absolute bottom-1 left-1/2 flex h-[82px] w-[810px] -translate-x-1/2 items-center justify-center rounded-lg bg-black/75 font-['Noto_Sans_CJK_SC',sans-serif] text-[50px] leading-none whitespace-nowrap text-white">
        <span className="mr-[30px]">进行锁选项配置</span>
        <span className="mr-4">选择全部</span>
        <span>点击确定</span>
      </div>
    </div>
  );
}
